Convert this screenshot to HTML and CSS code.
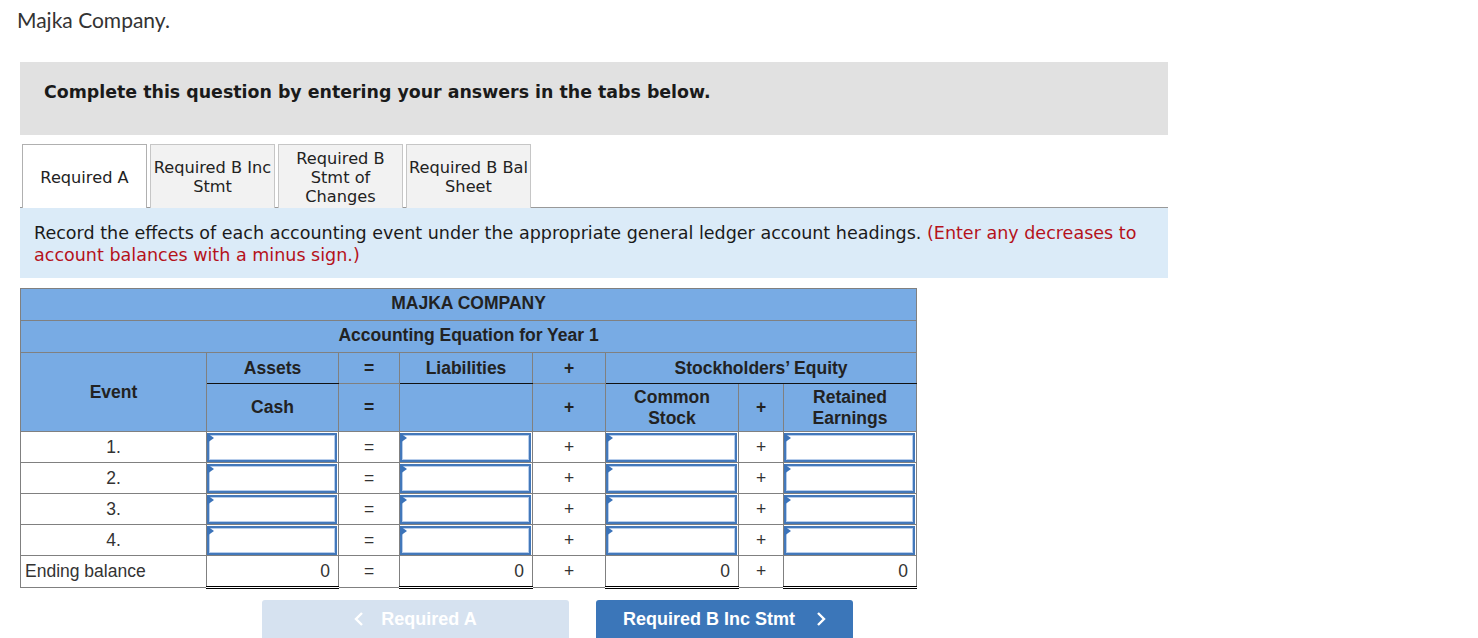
FILE: index.html
```html
<!DOCTYPE html>
<html>
<head>
<meta charset="utf-8">
<link rel="stylesheet" href="styles.css">
</head>
<body>
<div class="page">
  <div class="title">Majka Company.</div>
  <div class="prompt">Complete this question by entering your answers in the tabs below.</div>
  <div class="tabs">
    <div class="tab active">Required A</div>
    <div class="tab">Required B Inc Stmt</div>
    <div class="tab">Required B Stmt of Changes</div>
    <div class="tab">Required B Bal Sheet</div>
  </div>
  <div class="instr">Record the effects of each accounting event under the appropriate general ledger account headings. <span class="red">(Enter any decreases to account balances with a minus sign.)</span></div>
  <table class="eq">
    <colgroup>
      <col class="c-ev"><col class="c-cash"><col class="c-eq"><col class="c-val"><col class="c-plus"><col class="c-val"><col class="c-plus2"><col class="c-val">
    </colgroup>
    <thead>
      <tr class="h1"><th colspan="8">MAJKA COMPANY</th></tr>
      <tr class="h1"><th colspan="8">Accounting Equation for Year 1</th></tr>
      <tr class="h3">
        <th rowspan="2">Event</th>
        <th class="under">Assets</th>
        <th>=</th>
        <th class="under">Liabilities</th>
        <th>+</th>
        <th colspan="3" class="under">Stockholders’ Equity</th>
      </tr>
      <tr class="h4">
        <th>Cash</th>
        <th>=</th>
        <th></th>
        <th>+</th>
        <th>Common<br>Stock</th>
        <th>+</th>
        <th>Retained<br>Earnings</th>
      </tr>
    </thead>
    <tbody>
      <tr><td class="ev">1.</td><td class="in"><div class="box"></div></td><td class="op">=</td><td class="in"><div class="box"></div></td><td class="op">+</td><td class="in"><div class="box"></div></td><td class="op">+</td><td class="in"><div class="box"></div></td></tr>
      <tr><td class="ev">2.</td><td class="in"><div class="box"></div></td><td class="op">=</td><td class="in"><div class="box"></div></td><td class="op">+</td><td class="in"><div class="box"></div></td><td class="op">+</td><td class="in"><div class="box"></div></td></tr>
      <tr><td class="ev">3.</td><td class="in"><div class="box"></div></td><td class="op">=</td><td class="in"><div class="box"></div></td><td class="op">+</td><td class="in"><div class="box"></div></td><td class="op">+</td><td class="in"><div class="box"></div></td></tr>
      <tr><td class="ev">4.</td><td class="in"><div class="box"></div></td><td class="op">=</td><td class="in"><div class="box"></div></td><td class="op">+</td><td class="in"><div class="box"></div></td><td class="op">+</td><td class="in"><div class="box"></div></td></tr>
      <tr class="end"><td class="evl">Ending balance</td><td class="val">0</td><td class="op">=</td><td class="val">0</td><td class="op">+</td><td class="val">0</td><td class="op">+</td><td class="val">0</td></tr>
    </tbody>
  </table>
  <div class="nav">
    <div class="btn prev">
      <svg width="10" height="16" viewBox="0 0 10 16"><polyline points="8,2 2,8 8,14" fill="none" stroke="#fff" stroke-width="2.4"/></svg>
      <span>Required A</span>
    </div>
    <div class="btn next">
      <span>Required B Inc Stmt</span>
      <svg width="10" height="16" viewBox="0 0 10 16"><polyline points="2,2 8,8 2,14" fill="none" stroke="#fff" stroke-width="2.4"/></svg>
    </div>
  </div>
</div>
</body>
</html>
```
FILE: styles.css
```css
html, body {
  margin: 0;
  padding: 0;
  background: #fff;
}
.page {
  width: 1148px;
  padding: 0 20px;
}
.title {
  font-family: "Lato", "Open Sans", sans-serif;
  font-size: 21px;
  line-height: 24px;
  color: #333;
  margin: 8px 0 0 -3px;
}
.prompt {
  margin-top: 30px;
  background: #e1e1e1;
  font-family: "DejaVu Sans", sans-serif;
  font-weight: bold;
  font-size: 17.4px;
  line-height: 22px;
  color: #1a1a1a;
  padding: 19px 24px 32px;
}
.tabs {
  display: flex;
  gap: 3px;
  margin: 9px 0 -1px 2px;
  position: relative;
  z-index: 1;
}
.tab {
  box-sizing: border-box;
  width: 125px;
  height: 64px;
  border: 1px solid #c6c6c6;
  border-bottom: none;
  background: #f2f2f2;
  font-family: "DejaVu Sans", sans-serif;
  font-size: 16.2px;
  line-height: 19px;
  color: #222;
  display: flex;
  align-items: center;
  justify-content: center;
  text-align: center;
  padding: 1px 0 0;
}
.tab.active {
  background: #fff;
  border-color: #b0b0b0;
}
.instr {
  background: #dbebf8;
  border-top: 1px solid #999;
  font-family: "DejaVu Sans", sans-serif;
  font-size: 17.55px;
  line-height: 22px;
  color: #1a1a1a;
  padding: 14px 14px 12px;
}
.red {
  color: #b5121b;
}
.eq {
  margin-top: 10px;
  border-collapse: collapse;
  table-layout: fixed;
  width: 896px;
  font-family: "Liberation Sans", Arial, sans-serif;
  font-size: 17.5px;
  color: #222;
}
.c-ev { width: 186px; }
.c-cash { width: 132px; }
.c-val { width: 133px; }
.c-eq { width: 61px; }
.c-plus { width: 73px; }
.c-plus2 { width: 45px; }
.eq th, .eq td {
  border: 1px solid #808080;
  padding: 0;
  text-align: center;
}
.eq th {
  background: #78abe4;
  font-weight: bold;
  color: #222;
}
.eq .h1 th {
  height: 28px;
  padding-bottom: 3px;
}
.eq .h3 th {
  height: 30px;
}
.eq .h3 th.under {
  border-bottom: 1px solid #111;
}
.eq .h4 th {
  height: 47px;
  line-height: 21px;
}
.eq td {
  height: 30px;
  color: #333;
}
.eq td.in {
  padding: 0 1px 0 0;
  vertical-align: middle;
}
.box {
  position: relative;
  box-sizing: border-box;
  height: 29px;
  border: 2px solid #4378ba;
  box-shadow: inset 0 0 0 1px #b7cdeb;
  background: #fff;
}
.box::before {
  content: "";
  position: absolute;
  left: -2px;
  top: -2px;
  border-top: 5px solid transparent;
  border-bottom: 5px solid transparent;
  border-left: 7px solid #3b73b9;
}
.eq td.evl {
  text-align: left;
  padding-left: 4px;
}
.eq td.val {
  text-align: right;
  padding-right: 8px;
  border-bottom: 3px double #000;
}
.nav {
  margin-top: 11px;
  display: flex;
  gap: 27px;
  padding-left: 242px;
}
.btn {
  box-sizing: border-box;
  height: 44px;
  border-radius: 3px 3px 0 0;
  display: flex;
  align-items: center;
  justify-content: center;
  font-family: "Liberation Sans", Arial, sans-serif;
  font-weight: bold;
  font-size: 18px;
  color: #fff;
  padding-bottom: 6px;
}
.btn svg {
  display: block;
}
.prev {
  width: 307px;
  background: #d6e2f0;
  gap: 17px;
}
.next {
  width: 257px;
  background: #3b76b9;
  gap: 21px;
}
```
